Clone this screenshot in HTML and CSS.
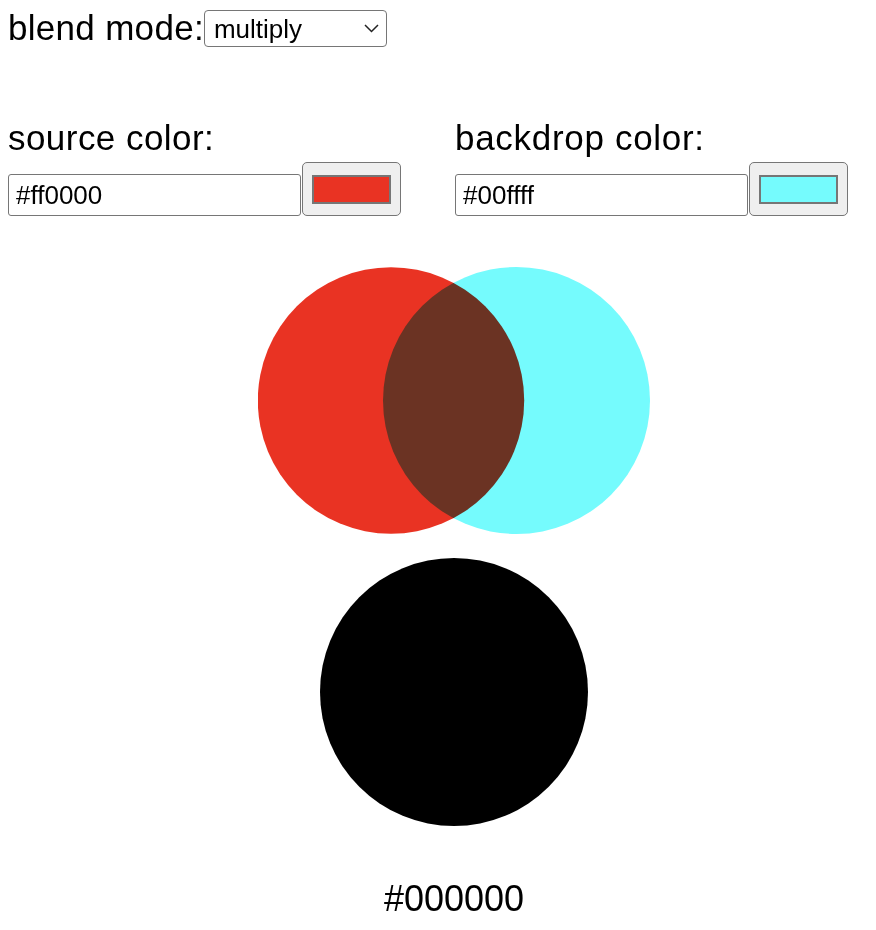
FILE: index.html
```html
<!DOCTYPE html>
<html>
<head>
<meta charset="utf-8">
<link rel="stylesheet" href="styles.css">
</head>
<body>
<div class="mode-row">
  <span class="mode-label">blend mode:</span>
  <div class="select-wrap">
    <select class="mode-select">
      <option>multiply</option>
    </select>
    <svg class="chevron" width="15" height="9" viewBox="0 0 15 9"><path d="M1 1 L7.5 7.5 L14 1" fill="none" stroke="#222" stroke-width="1.5"/></svg>
  </div>
</div>
<div class="pickers">
  <div class="picker">
    <div class="picker-label">source color:</div>
    <div class="picker-inputs">
      <input class="hex-input" type="text" value="#ff0000">
      <div class="swatch-btn"><span class="swatch swatch-red"></span></div>
    </div>
  </div>
  <div class="picker">
    <div class="picker-label picker-label-wide">backdrop color:</div>
    <div class="picker-inputs">
      <input class="hex-input" type="text" value="#00ffff">
      <div class="swatch-btn"><span class="swatch swatch-cyan"></span></div>
    </div>
  </div>
</div>
<div class="stage">
  <svg class="venn" width="392" height="267" viewBox="0 0 392 267">
    <circle cx="258.5" cy="133.5" r="133.5" fill="#75fbfd"/>
    <circle class="src" cx="133" cy="133.5" r="133.2" fill="#e93323"/>
  </svg>
  <div class="result-circle"></div>
  <div class="result-text">#000000</div>
</div>
</body>
</html>
```
FILE: styles.css
```css
body {
  margin: 8px;
  font-family: "Liberation Sans", Arial, sans-serif;
  color: #000;
  background: #fff;
}
.mode-row {
  display: flex;
  align-items: flex-start;
}
.mode-label {
  font-size: 35px;
  line-height: 40px;
  letter-spacing: 0.3px;
  white-space: nowrap;
}
.select-wrap {
  position: relative;
  margin-top: 2px;
}
.mode-select {
  appearance: none;
  -webkit-appearance: none;
  width: 183px;
  height: 37px;
  box-sizing: border-box;
  border: 1px solid #767676;
  border-radius: 4px;
  background: #fff;
  font-family: "Liberation Sans", Arial, sans-serif;
  font-size: 26px;
  padding: 0 0 0 9px;
  color: #000;
  display: block;
}
.chevron {
  position: absolute;
  left: 160px;
  top: 14px;
  pointer-events: none;
}
.pickers {
  display: flex;
  gap: 54px;
  margin-top: 70px;
}
.picker {
  display: flex;
  flex-direction: column;
}
.picker-label {
  font-size: 35px;
  line-height: 40px;
  letter-spacing: 0.45px;
  height: 40px;
  margin-bottom: 4px;
}
.picker-label-wide {
  letter-spacing: 0.7px;
}
.picker-inputs {
  display: flex;
  align-items: flex-end;
}
.hex-input {
  width: 293px;
  height: 42px;
  box-sizing: border-box;
  border: 1px solid #767676;
  border-radius: 3px;
  font-family: "Liberation Sans", Arial, sans-serif;
  font-size: 26px;
  padding: 0 0 0 7px;
  margin: 0;
  color: #000;
}
.swatch-btn {
  width: 99px;
  height: 54px;
  box-sizing: border-box;
  margin-left: 1px;
  background: #efefef;
  border: 1px solid #767676;
  border-radius: 5px;
  display: flex;
  align-items: center;
  justify-content: center;
}
.swatch {
  display: block;
  width: 79px;
  height: 29px;
  box-sizing: border-box;
  border: 2px solid #767676;
}
.swatch-red { background: #e93323; }
.swatch-cyan { background: #75fbfd; }
.stage {
  display: flex;
  flex-direction: column;
  align-items: center;
  padding-left: 32px;
  margin-top: 51px;
}
.venn {
  display: block;
  margin-left: -1px;
}
.venn .src {
  mix-blend-mode: multiply;
}
.result-circle {
  width: 268px;
  height: 268px;
  border-radius: 50%;
  background: #000;
  margin-top: 24px;
}
.result-text {
  font-size: 36px;
  line-height: 40px;
  margin-top: 53px;
}
```
